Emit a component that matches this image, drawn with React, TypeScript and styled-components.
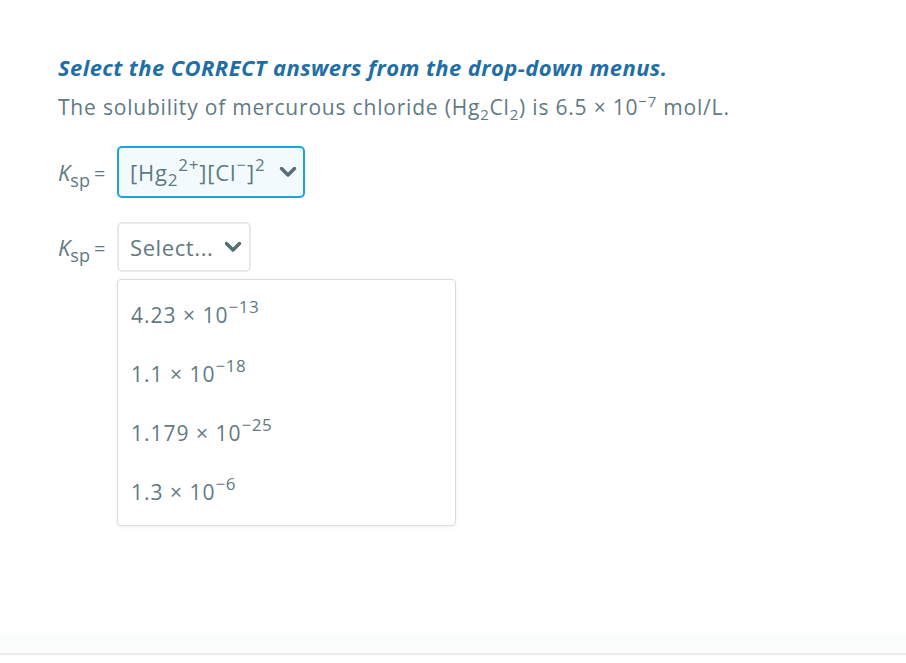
import React from "react";
import styled, { createGlobalStyle } from "styled-components";

const GlobalStyle = createGlobalStyle`
  html, body {
    margin: 0;
    padding: 0;
    background: #ffffff;
  }
  body {
    font-family: "Open Sans", "Noto Sans", sans-serif;
    color: #5f7a84;
  }
`;

const Page = styled.div`
  min-height: 100vh;
  display: flex;
  flex-direction: column;
  box-sizing: border-box;
`;

const Content = styled.div`
  padding: 50px 0 0 58px;
  display: flex;
  flex-direction: column;
`;

const Heading = styled.h2`
  margin: 0;
  font-size: 22px;
  font-weight: 700;
  font-style: italic;
  letter-spacing: 0.4px;
  color: #1f6fa6;
  line-height: 34px;
`;

const Prompt = styled.p`
  margin: 7px 0 0;
  font-size: 21px;
  line-height: 32px;
  letter-spacing: 0.8px;
  color: #5f7a84;

  sub, sup {
    font-size: 15px;
    line-height: 0;
  }
`;

const Row = styled.div<{ $top: number }>`
  display: flex;
  align-items: center;
  margin-top: ${(p) => p.$top}px;
`;

const Label = styled.div`
  width: 59px;
  font-size: 22px;
  color: #5f7a84;
  white-space: nowrap;

  i {
    font-style: italic;
  }
  sub {
    font-size: 18px;
    line-height: 0;
    vertical-align: -6px;
  }
  span.eq {
    margin-left: 4px;
    font-size: 20px;
  }
`;

const SelectWrap = styled.div`
  position: relative;
`;

const SelectBox = styled.div<{ $active?: boolean; $height: number }>`
  box-sizing: border-box;
  height: ${(p) => p.$height}px;
  display: flex;
  align-items: center;
  gap: ${(p) => (p.$active ? 14 : 11)}px;
  padding: 0 ${(p) => (p.$active ? 6 : 7)}px 0 11px;
  border: 2px solid ${(p) => (p.$active ? "#1ba4dc" : "#e8e8e8")};
  background: ${(p) => (p.$active ? "#f2fafd" : "#ffffff")};
  border-radius: 5px;
  font-size: 22px;
  letter-spacing: ${(p) => (p.$active ? 0.8 : 0.6)}px;
  color: #5f7a84;

  sub {
    font-size: 17px;
    line-height: 0;
    vertical-align: -5px;
  }
  sup {
    font-size: 17px;
    line-height: 0;
    vertical-align: 10px;
  }
`;

const Menu = styled.div`
  position: absolute;
  top: calc(100% + 7px);
  left: 0;
  width: 339px;
  box-sizing: border-box;
  background: #ffffff;
  border: 1px solid #dcdcdc;
  border-radius: 4px;
  box-shadow: 0 1px 4px rgba(0, 0, 0, 0.06);
  padding: 5px 0 4px;
`;

const Option = styled.div`
  height: 59px;
  display: flex;
  align-items: center;
  padding-left: 13px;
  font-size: 21px;
  color: #5f7a84;
  letter-spacing: 1px;

  sup {
    font-size: 17px;
    line-height: 0;
    vertical-align: 10px;
    letter-spacing: 0.5px;
  }
`;

const Footer = styled.div`
  margin-top: auto;
  height: 20px;
  background: #fbfcfc;
  border-bottom: 2px solid #ebebeb;
  margin-bottom: 8px;
`;

const Chevron = () => (
  <svg width="18" height="12" viewBox="0 0 18 12" fill="none">
    <path
      d="M2.5 2.5 L9 9 L15.5 2.5"
      stroke="#546e78"
      strokeWidth="3.4"
      strokeLinecap="round"
      strokeLinejoin="round"
    />
  </svg>
);

const options = [
  { base: "4.23", exp: "13" },
  { base: "1.1", exp: "18" },
  { base: "1.179", exp: "25" },
  { base: "1.3", exp: "6" },
];

const KspLabel = () => (
  <Label>
    <i>K</i>
    <sub>sp</sub>
    <span className="eq">=</span>
  </Label>
);

export default function App() {
  return (
    <Page>
      <GlobalStyle />
      <Content>
        <Heading>Select the CORRECT answers from the drop-down menus.</Heading>
        <Prompt>
          The solubility of mercurous chloride (Hg<sub>2</sub>Cl<sub>2</sub>) is 6.5 × 10<sup>−7</sup> mol/L.
        </Prompt>
        <Row $top={23}>
          <KspLabel />
          <SelectWrap>
            <SelectBox $active $height={52}>
              <span>
                [Hg<sub>2</sub>
                <sup>2+</sup>][Cl<sup>−</sup>]<sup>2</sup>
              </span>
              <Chevron />
            </SelectBox>
          </SelectWrap>
        </Row>
        <Row $top={24}>
          <KspLabel />
          <SelectWrap>
            <SelectBox $height={50}>
              <span>Select...</span>
              <Chevron />
            </SelectBox>
            <Menu>
              {options.map((o) => (
                <Option key={o.base}>
                  <span>
                    {o.base} × 10<sup>−{o.exp}</sup>
                  </span>
                </Option>
              ))}
            </Menu>
          </SelectWrap>
        </Row>
      </Content>
      <Footer />
    </Page>
  );
}
